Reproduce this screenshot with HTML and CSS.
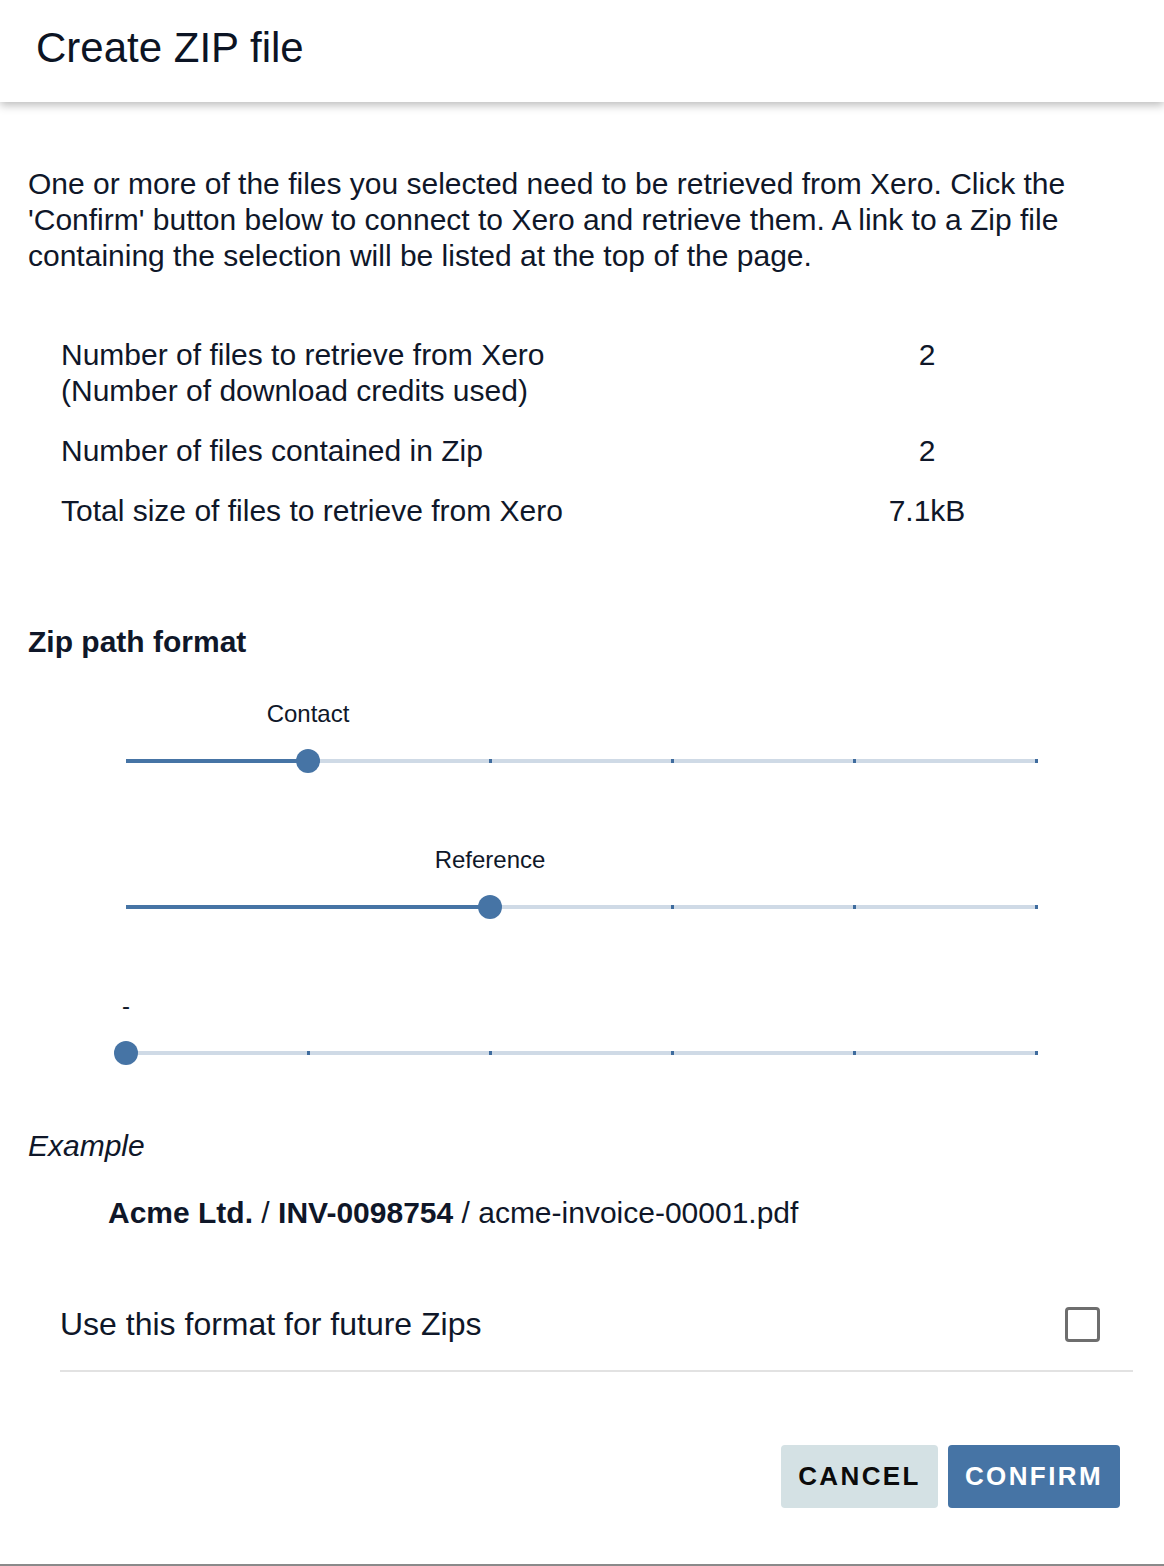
FILE: index.html
```html
<!DOCTYPE html>
<html lang="en">
<head>
<meta charset="utf-8">
<title>Create ZIP file</title>
<link rel="stylesheet" href="styles.css">
</head>
<body>
<div class="dialog">
  <header class="dialog-header">
    <h1 class="dialog-title">Create ZIP file</h1>
  </header>
  <main class="dialog-content">
    <p class="intro">One or more of the files you selected need to be retrieved from Xero. Click the 'Confirm' button below to connect to Xero and retrieve them. A link to a Zip file containing the selection will be listed at the top of the page.</p>

    <div class="stats">
      <div class="stat-label">Number of files to retrieve from Xero<br>(Number of download credits used)</div>
      <div class="stat-value">2</div>
      <div class="stat-label">Number of files contained in Zip</div>
      <div class="stat-value">2</div>
      <div class="stat-label">Total size of files to retrieve from Xero</div>
      <div class="stat-value">7.1kB</div>
    </div>

    <h2 class="section-title">Zip path format</h2>

    <div class="slider">
      <div class="track">
        <div class="track-active" style="width:20%"></div>
        <span class="tick" style="left:40%"></span>
        <span class="tick" style="left:60%"></span>
        <span class="tick" style="left:80%"></span>
        <span class="tick" style="left:100%"></span>
        <span class="thumb" style="left:20%"></span>
        <span class="value-label" style="left:20%">Contact</span>
      </div>
    </div>

    <div class="slider">
      <div class="track">
        <div class="track-active" style="width:40%"></div>
        <span class="tick" style="left:60%"></span>
        <span class="tick" style="left:80%"></span>
        <span class="tick" style="left:100%"></span>
        <span class="thumb" style="left:40%"></span>
        <span class="value-label" style="left:40%">Reference</span>
      </div>
    </div>

    <div class="slider">
      <div class="track">
        <span class="tick" style="left:20%"></span>
        <span class="tick" style="left:40%"></span>
        <span class="tick" style="left:60%"></span>
        <span class="tick" style="left:80%"></span>
        <span class="tick" style="left:100%"></span>
        <span class="thumb" style="left:0%"></span>
        <span class="value-label" style="left:0%">-</span>
      </div>
    </div>

    <div class="example-title">Example</div>
    <div class="example-path"><strong>Acme Ltd.</strong> / <strong>INV-0098754</strong> / acme-invoice-00001.pdf</div>

    <label class="option-row">
      <span class="option-text">Use this format for future Zips</span>
      <span class="checkbox"></span>
    </label>

    <div class="actions">
      <button class="btn btn-cancel">CANCEL</button>
      <button class="btn btn-confirm">CONFIRM</button>
    </div>
  </main>
</div>
</body>
</html>
```

FILE: styles.css
```css
* { box-sizing: border-box; }

html, body {
  margin: 0;
  padding: 0;
  background: #ffffff;
}

body {
  font-family: "Liberation Sans", Arial, Helvetica, sans-serif;
  color: #0f1729;
}

.dialog {
  width: 1164px;
  min-height: 1566px;
  border-bottom: 2px solid #8a8a8a;
  background: #fff;
}

.dialog-header {
  height: 102px;
  padding: 23px 36px 29px;
  background: #fff;
  box-shadow: 0 3px 9px rgba(0, 0, 0, 0.28);
  position: relative;
  z-index: 1;
}

.dialog-title {
  margin: 0;
  font-size: 42px;
  line-height: 50px;
  font-weight: normal;
  color: #0c1424;
}

.dialog-content {
  padding: 64px 0 0 28px;
}

.intro {
  margin: 0;
  font-size: 30px;
  line-height: 36px;
  padding-right: 40px;
}

.stats {
  margin-top: 51px;
  display: grid;
  grid-template-columns: 799px 200px;
  font-size: 30px;
  line-height: 36px;
}

.stat-label {
  padding: 12px 0 12px 33px;
}

.stat-value {
  padding: 12px 0;
  text-align: center;
}

.section-title {
  margin: 83px 0 0;
  font-size: 30px;
  line-height: 36px;
  font-weight: bold;
}

.slider {
  margin-left: 98px;
  width: 910px;
  padding: 99px 0 43px;
}

.track {
  position: relative;
  height: 4px;
  background: #cfdae6;
}

.track-active {
  height: 4px;
  background: #4674a5;
}

.tick {
  position: absolute;
  top: 0;
  width: 3px;
  height: 4px;
  margin-left: -1.5px;
  background: #3f6c9e;
}

.thumb {
  position: absolute;
  top: -10px;
  width: 24px;
  height: 24px;
  margin-left: -12px;
  border-radius: 50%;
  background: #4674a5;
}

.value-label {
  position: absolute;
  top: -60px;
  font-size: 24px;
  line-height: 30px;
  white-space: nowrap;
  transform: translateX(-50%);
  color: #0f1729;
}

.example-title {
  margin-top: 30px;
  font-size: 30px;
  line-height: 36px;
  font-style: italic;
}

.example-path {
  margin-top: 31px;
  padding-left: 80px;
  font-size: 30px;
  line-height: 36px;
}

.example-path strong {
  font-weight: bold;
}

.option-row {
  margin: 51px 31px 0 32px;
  padding: 22px 33px 26px 0;
  display: flex;
  align-items: center;
  justify-content: space-between;
  border-bottom: 2px solid #e2e2e2;
}

.option-text {
  font-size: 32px;
  line-height: 40px;
}

.checkbox {
  width: 35px;
  height: 35px;
  border: 3px solid #6e6e6e;
  border-radius: 4px;
}

.actions {
  margin-top: 73px;
  padding-right: 44px;
  display: flex;
  justify-content: flex-end;
  gap: 10px;
}

.btn {
  height: 63px;
  padding: 0 17px;
  border: none;
  border-radius: 4px;
  font-family: "Liberation Sans", Arial, Helvetica, sans-serif;
  font-size: 26px;
  font-weight: bold;
  letter-spacing: 2.4px;
  cursor: pointer;
}

.btn-cancel {
  background: #d4e1e4;
  color: #0b0b0b;
}

.btn-confirm {
  background: #4674a5;
  color: #ffffff;
}
```
